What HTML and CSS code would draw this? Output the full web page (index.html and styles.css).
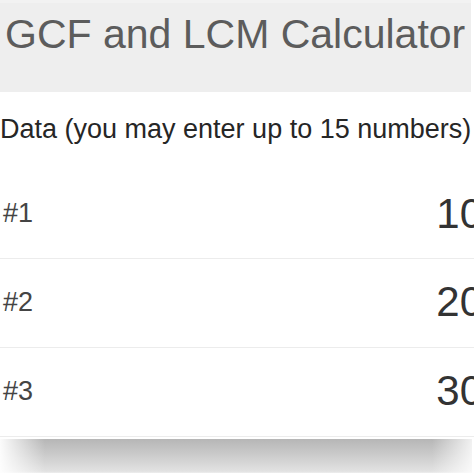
FILE: index.html
```html
<!DOCTYPE html>
<html lang="en">
<head>
<meta charset="utf-8">
<title>GCF and LCM Calculator</title>
<link rel="stylesheet" href="styles.css">
</head>
<body>
<div class="page">
  <header class="title-bar">
    <h1 class="title">GCF and LCM Calculator</h1>
  </header>
  <p class="data-label">Data (you may enter up to 15 numbers)</p>
  <ul class="rows">
    <li class="row"><span class="row-label">#1</span><span class="row-value">10</span></li>
    <li class="row"><span class="row-label">#2</span><span class="row-value">20</span></li>
    <li class="row"><span class="row-label">#3</span><span class="row-value">30</span></li>
  </ul>
  <div class="shadow-bar"></div>
</div>
</body>
</html>
```
FILE: styles.css
```css
html, body {
  margin: 0;
  padding: 0;
  background: #ffffff;
  overflow: hidden;
}
body {
  width: 474px;
  height: 474px;
  font-family: "Liberation Sans", Arial, Helvetica, sans-serif;
}
.page {
  display: flex;
  flex-direction: column;
  width: 474px;
}
.title-bar {
  background: #eeeeee;
  border-top: 3px solid #f2f2f2;
  height: 89px;
  margin-right: 3px;
}
.title {
  margin: 0;
  padding: 8px 0 0 5px;
  font-size: 41px;
  line-height: 46px;
  font-weight: normal;
  color: #5c5c5c;
  white-space: nowrap;
}
.data-label {
  margin: 21px 0 0 0;
  font-size: 27px;
  line-height: 32px;
  color: #262626;
  white-space: nowrap;
}
.rows {
  list-style: none;
  margin: 25.5px 0 0 0;
  padding: 0;
}
.row {
  display: flex;
  justify-content: space-between;
  align-items: center;
  height: 88px;
  border-bottom: 1.5px solid #ececec;
  margin-right: -9px;
}
.row:first-child {
  height: 87px;
}
.row-label {
  padding-left: 3px;
  font-size: 27px;
  line-height: 30px;
  color: #444444;
  margin-top: -2px;
}
.row-value {
  font-size: 42px;
  line-height: 46px;
  color: #333333;
  margin-top: -1px;
}
.shadow-bar {
  margin-top: 2px;
  margin-right: 2px;
  height: 34px;
  background:
    linear-gradient(to right, rgba(255,255,255,0.95) 0, rgba(255,255,255,0) 45px, rgba(255,255,255,0) calc(100% - 40px), rgba(255,255,255,0.8) 100%),
    linear-gradient(to bottom, #b6b6b6 0, #c8c8c8 40%, #e2e2e2 95%, #eeeeee 100%);
}
```
